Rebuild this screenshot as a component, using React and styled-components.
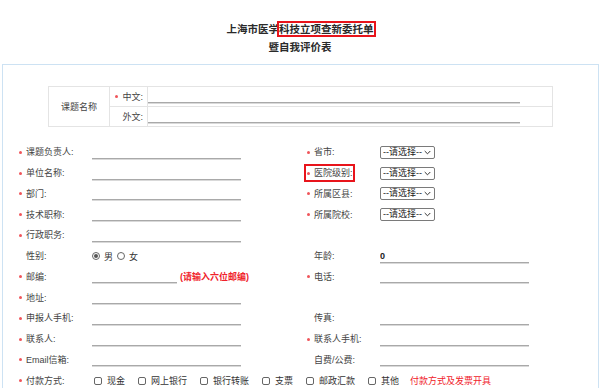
import React from 'react'
import styled, { createGlobalStyle } from 'styled-components'

const GlobalStyle = createGlobalStyle`
  body {
    margin: 0;
    background: #fff;
    font-family: "Liberation Sans", "Noto Sans CJK SC", sans-serif;
    color: #444;
  }
`

const chevron = encodeURIComponent(
  '<svg xmlns="http://www.w3.org/2000/svg" width="7" height="5" viewBox="0 0 7 5"><path d="M0.7 1 L3.5 3.8 L6.3 1" fill="none" stroke="#333" stroke-width="1"/></svg>'
)

const Page = styled.div`
  width: 600px;
  height: 388px;
  overflow: hidden;
`

const Title = styled.h1`
  margin: 0 0 8px;
  padding-top: 21px;
  text-align: center;
  font-size: 10.5px;
  line-height: 17.5px;
  font-weight: bold;
  color: #2a2a2a;
`

const Marked = styled.span`
  outline: 2px solid #e8141b;
  outline-offset: 0.5px;
`

const Panel = styled.div`
  margin: 0 1px 0 2px;
  height: 330px;
  border: 1px solid #cde2f3;
  border-bottom: none;
  padding-top: 21px;
`

const SubjectBox = styled.div`
  display: grid;
  grid-template-columns: 61px 38px 1fr;
  grid-template-rows: 20px 20px;
  width: 504px;
  margin-left: 45px;
  border-top: 1px solid #e4e4e4;
  border-left: 1px solid #e4e4e4;
  font-size: 9px;
`

const SubjectCell = styled.div`
  display: flex;
  align-items: center;
  justify-content: ${p => p.$align || 'flex-start'};
  grid-row: ${p => p.$span ? 'span 2' : 'auto'};
  padding-right: ${p => p.$align === 'flex-end' ? '4px' : '0'};
  border-right: 1px solid #e4e4e4;
  border-bottom: 1px solid #e4e4e4;
`

const Form = styled.div`
  display: grid;
  grid-template-columns: 74px 214px 74px 1fr;
  grid-auto-rows: 20.75px;
  margin-top: 15px;
  padding-left: 15px;
  font-size: 9px;
`

const Label = styled.div`
  display: flex;
  align-items: center;
  align-self: center;
  width: max-content;
  line-height: 14px;
  outline: ${p => p.$boxed ? '2px solid #e8141b' : 'none'};
  outline-offset: 0.5px;
`

const Dot = styled.span`
  width: 3px;
  height: 3px;
  border-radius: 50%;
  margin: 0 4px 0 1px;
  background: ${p => p.$on ? '#f0555a' : 'transparent'};
`

const Field = styled.div`
  display: flex;
  align-items: center;
  grid-column: ${p => p.$wide ? 'span 3' : 'auto'};
  padding-left: ${p => p.$wide ? '2px' : '0'};
`

const Line = styled.input`
  width: ${p => p.$w || 149}px;
  height: 13px;
  box-sizing: border-box;
  padding: 0;
  border: none;
  border-bottom: 1px solid #a9a9a9;
  box-shadow: 0 1px 0 #d9d9d9;
  font: inherit;
  font-weight: bold;
  color: #222;
  outline: none;
  background: transparent;
`

const Select = styled.select`
  appearance: none;
  width: 55px;
  height: 13px;
  box-sizing: border-box;
  padding: 0 0 0 2px;
  border: 1px solid #7a7a7a;
  border-radius: 2px;
  font-family: inherit;
  font-size: 9px;
  line-height: 11px;
  color: #222;
  background: #fff url("data:image/svg+xml,${chevron}") no-repeat right 3px center;
`

const Radio = styled.span`
  display: inline-flex;
  align-items: center;
  justify-content: center;
  width: 8px;
  height: 8px;
  box-sizing: border-box;
  border: 1px solid #666;
  border-radius: 50%;
  margin-right: 4px;
  &::after {
    content: '';
    width: 4px;
    height: 4px;
    border-radius: 50%;
    background: ${p => p.$checked ? '#555' : 'transparent'};
  }
`

const Box = styled.span`
  width: 8px;
  height: 8px;
  box-sizing: border-box;
  border: 1px solid #666;
  border-radius: 2px;
  margin-right: 5px;
`

const Option = styled.span`
  display: inline-flex;
  align-items: center;
  margin-right: ${p => p.$gap || 0}px;
  color: #333;
`

const Hint = styled.span`
  margin-left: ${p => p.$gap || 3}px;
  color: #f0222a;
  font-weight: ${p => p.$bold ? 'bold' : 'normal'};
`

const Req = ({ on, boxed, children }) => (
  <Label $boxed={boxed}>
    <Dot $on={on} />
    {children}:
  </Label>
)

const Choose = () => (
  <Field>
    <Select><option>--请选择--</option></Select>
  </Field>
)

const payments = ['现金', '网上银行', '银行转账', '支票', '邮政汇款', '其他']

const App = () => (
  <Page>
    <GlobalStyle />
    <Title>
      上海市医学<Marked>科技立项查新委托单</Marked>
      <br />
      暨自我评价表
    </Title>
    <Panel>
      <SubjectBox>
        <SubjectCell $span $align="center">课题名称</SubjectCell>
        <SubjectCell $align="flex-end"><Dot $on />中文:</SubjectCell>
        <SubjectCell><Line $w={372} /></SubjectCell>
        <SubjectCell $align="flex-end">外文:</SubjectCell>
        <SubjectCell><Line $w={372} /></SubjectCell>
      </SubjectBox>

      <Form>
        <Req on>课题负责人</Req>
        <Field><Line /></Field>
        <Req on>省市</Req>
        <Choose />

        <Req on>单位名称</Req>
        <Field><Line /></Field>
        <Req on boxed>医院级别</Req>
        <Choose />

        <Req on>部门</Req>
        <Field><Line /></Field>
        <Req on>所属区县</Req>
        <Choose />

        <Req on>技术职称</Req>
        <Field><Line /></Field>
        <Req on>所属院校</Req>
        <Choose />

        <Req on>行政职务</Req>
        <Field><Line /></Field>
        <div />
        <div />

        <Req>性别</Req>
        <Field>
          <Radio $checked />
          <Option $gap={4}>男</Option>
          <Radio />
          <Option>女</Option>
        </Field>
        <Req>年龄</Req>
        <Field><Line defaultValue="0" /></Field>

        <Req on>邮编</Req>
        <Field>
          <Line $w={85} />
          <Hint $bold>(请输入六位邮编)</Hint>
        </Field>
        <Req on>电话</Req>
        <Field><Line /></Field>

        <Req on>地址</Req>
        <Field><Line /></Field>
        <div />
        <div />

        <Req on>申报人手机</Req>
        <Field><Line /></Field>
        <Req>传真</Req>
        <Field><Line /></Field>

        <Req on>联系人</Req>
        <Field><Line /></Field>
        <Req on>联系人手机</Req>
        <Field><Line /></Field>

        <Req on>Email信箱</Req>
        <Field><Line /></Field>
        <Req>自费/公费</Req>
        <Field><Line /></Field>

        <Req on>付款方式</Req>
        <Field $wide>
          {payments.map(p => (
            <Option key={p} $gap={13}>
              <Box />
              {p}
            </Option>
          ))}
          <Hint $gap={-2}>付款方式及发票开具</Hint>
        </Field>
      </Form>
    </Panel>
  </Page>
)

export default App
